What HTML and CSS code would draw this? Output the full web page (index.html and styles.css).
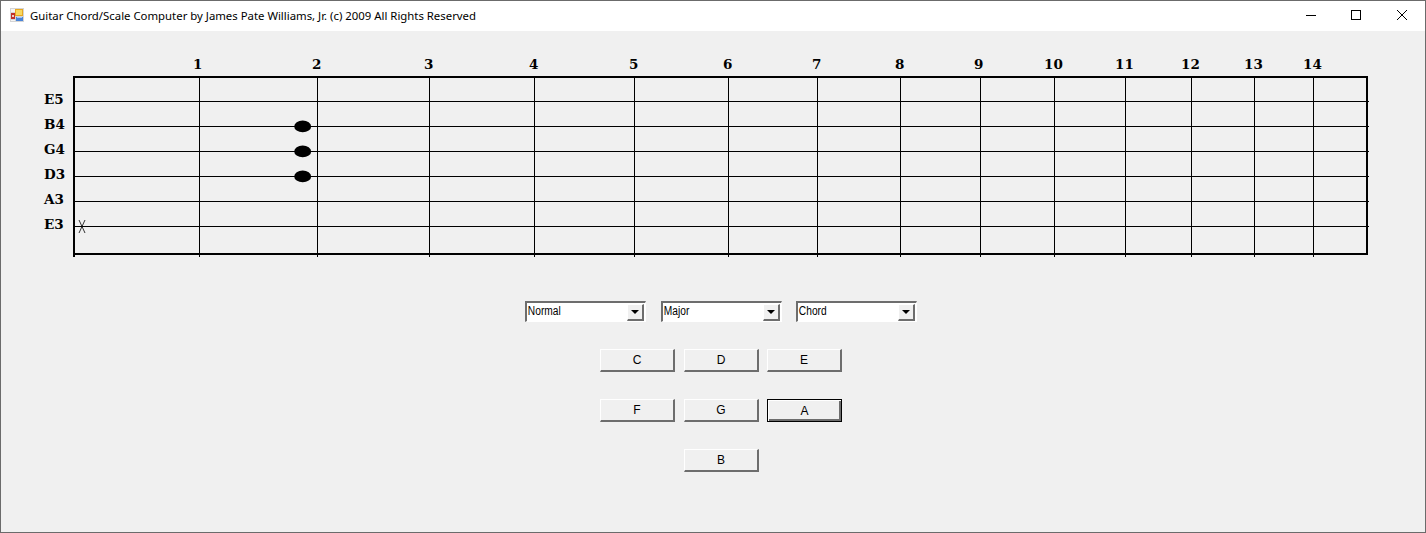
FILE: index.html
```html
<!DOCTYPE html>
<html lang="en">
<head>
<meta charset="UTF-8">
<title>Guitar Chord/Scale Computer</title>
<link rel="stylesheet" href="styles.css">
</head>
<body>
<div class="window">
  <div class="titlebar">
    <svg class="app-icon" width="16" height="16" viewBox="0 0 16 16" shape-rendering="crispEdges">
      <rect x="0" y="0" width="14" height="14" fill="#d4d4d4"/>
      <rect x="1" y="1" width="4" height="3" fill="#f4f4f4"/>
      <rect x="1" y="12" width="4" height="1" fill="#f4f4f4"/>
      <rect x="1" y="5" width="4" height="6" fill="#c03028"/>
      <rect x="2" y="7" width="2" height="2" fill="#f0d0c8"/>
      <rect x="5" y="1" width="8" height="7" fill="#e8a820"/>
      <rect x="6" y="2" width="6" height="5" fill="#f8d860"/>
      <rect x="6" y="9" width="7" height="4" fill="#4a84d8"/>
      <rect x="7" y="9" width="5" height="1" fill="#a8c8f0"/>
    </svg>
    <span class="title-text">Guitar Chord/Scale Computer by James Pate Williams, Jr. (c) 2009 All Rights Reserved</span>
    <div class="win-buttons">
      <svg class="win-btn" width="46" height="30" viewBox="0 0 46 30"><path d="M19 14.5h10" stroke="#000" fill="none"/></svg>
      <svg class="win-btn" width="46" height="30" viewBox="0 0 46 30"><rect x="18.5" y="9.5" width="9" height="9" stroke="#000" fill="none"/></svg>
      <svg class="win-btn" width="46" height="30" viewBox="0 0 46 30"><path d="M18 9l10 10M28 9l-10 10" stroke="#000" fill="none"/></svg>
    </div>
  </div>
  <div class="client">
    <svg class="board" width="1424" height="240" viewBox="0 0 1424 240" id="board"></svg>
    <div class="controls">
      <div class="combos">
        <div class="combo"><span class="combo-text">Normal</span><span class="combo-btn"><i></i></span></div>
        <div class="combo"><span class="combo-text">Major</span><span class="combo-btn"><i></i></span></div>
        <div class="combo"><span class="combo-text">Chord</span><span class="combo-btn"><i></i></span></div>
      </div>
      <div class="keys">
        <button class="note">C</button>
        <button class="note">D</button>
        <button class="note">E</button>
        <button class="note">F</button>
        <button class="note">G</button>
        <button class="note active">A</button>
        <button class="note last">B</button>
      </div>
    </div>
  </div>
</div>
<script src="board.js"></script>
</body>
</html>
```

FILE: styles.css
```css
html, body {
  margin: 0;
  height: 100%;
  overflow: hidden;
}
.window {
  box-sizing: border-box;
  width: 1426px;
  height: 533px;
  border: 1px solid #6b6b6b;
  background-color: #f0f0f0;
  display: flex;
  flex-direction: column;
}
.titlebar {
  height: 30px;
  background-color: #fff;
  display: flex;
  align-items: center;
  padding-left: 9px;
}
.app-icon {
  margin-right: 4px;
}
.title-text {
  font-family: "Noto Sans", sans-serif;
  font-size: 11.36px;
  color: #000;
  white-space: nowrap;
  margin-bottom: 2px;
}
.win-buttons {
  margin-left: auto;
  display: flex;
}
.win-btn {
  display: block;
}
.board {
  display: block;
}
.board .lbl {
  font-family: "DejaVu Serif", serif;
  font-weight: bold;
  font-size: 13.5px;
  fill: #000;
}
.controls {
  padding-top: 30px;
  padding-left: 16px;
  display: flex;
  flex-direction: column;
  align-items: center;
  font-family: "Liberation Sans", sans-serif;
  font-size: 12px;
}
.combos {
  display: grid;
  grid-template-columns: 136px 135px 121px;
}
.combo {
  box-sizing: border-box;
  width: 121px;
  height: 21px;
  background-color: #fff;
  border-style: solid;
  border-width: 2px 1px 1px 2px;
  border-color: #6d6d6d #fff #fff #6d6d6d;
  display: flex;
  align-items: center;
  justify-content: space-between;
}
.combo-text {
  padding-left: 1px;
  padding-bottom: 2px;
  color: #000;
  transform: scaleX(0.85);
  transform-origin: left center;
}
.combo-btn {
  box-sizing: border-box;
  width: 17px;
  height: 17px;
  margin-right: 1px;
  background-color: #f0f0f0;
  border-style: solid;
  border-width: 1px 2px 2px 1px;
  border-color: #fff #6d6d6d #6d6d6d #fff;
  display: flex;
  align-items: center;
  justify-content: center;
}
.combo-btn i {
  display: block;
  width: 0;
  height: 0;
  border-left: 4px solid transparent;
  border-right: 4px solid transparent;
  border-top: 4px solid #000;
}
.keys {
  display: grid;
  grid-template-columns: 84px 83px 75px;
  row-gap: 27px;
  margin-top: 27px;
}
.note {
  box-sizing: border-box;
  width: 75px;
  height: 23px;
  padding: 0;
  background-color: #f0f0f0;
  border-style: solid;
  border-width: 1px 2px 2px 1px;
  border-color: #fff #6d6d6d #6d6d6d #fff;
  font-family: "Liberation Sans", sans-serif;
  font-size: 12px;
  color: #000;
}
.note.last {
  grid-column: 2;
}
.note.active {
  border: 1px solid #000;
  box-shadow: inset 1px 1px 0 #fff, inset -2px -2px 0 #6d6d6d;
}
```

FILE: board.js
```js
const NS = 'http://www.w3.org/2000/svg';
const board = document.getElementById('board');

// coordinates below are window pixels, the svg starts under the titlebar
const dx = -1, dy = -31;
const frets = [199, 317, 429, 534, 634, 728, 817, 900, 980, 1054, 1125, 1191, 1254, 1313];
const fretLabelX = [193, 312, 424, 529, 629, 723, 812, 895, 974, 1044, 1115, 1181, 1244, 1303];
const strings = [101, 126, 151, 176, 201, 226];
const names = ['E5', 'B4', 'G4', 'D3', 'A3', 'E3'];

function add(tag, attrs, text) {
  const el = document.createElementNS(NS, tag);
  for (const k in attrs) el.setAttribute(k, attrs[k]);
  if (text) el.textContent = text;
  board.appendChild(el);
  return el;
}

function box(x, y, w, h) {
  add('rect', { x: x + dx, y: y + dy, width: w, height: h, fill: '#000' });
}

// strings and frets stick out one pixel past the outer frame
strings.forEach(y => box(75, y, 1294, 1));
frets.forEach(x => box(x, 78, 1, 179));
box(73, 76, 1295, 2);
box(73, 253, 1295, 2);
box(73, 76, 2, 181);
box(1366, 76, 2, 179);

frets.forEach((x, i) => add('text', { class: 'lbl', x: fretLabelX[i] + dx, y: 69 + dy }, String(i + 1)));
names.forEach((n, i) => add('text', { class: 'lbl', x: 44 + dx, y: strings[i] + 3 + dy }, n));

[126, 151, 176].forEach(y => add('ellipse', { cx: 302.7 + dx, cy: y + 0.4 + dy, rx: 8.5, ry: 5.8, fill: '#000' }));

// muted string
const mx = 79 + dx, my = 220 + dy;
add('path', { d: `M${mx} ${my}l6 13M${mx + 6} ${my}l-6 13`, stroke: '#000', fill: 'none', 'stroke-width': 0.8 });
```
